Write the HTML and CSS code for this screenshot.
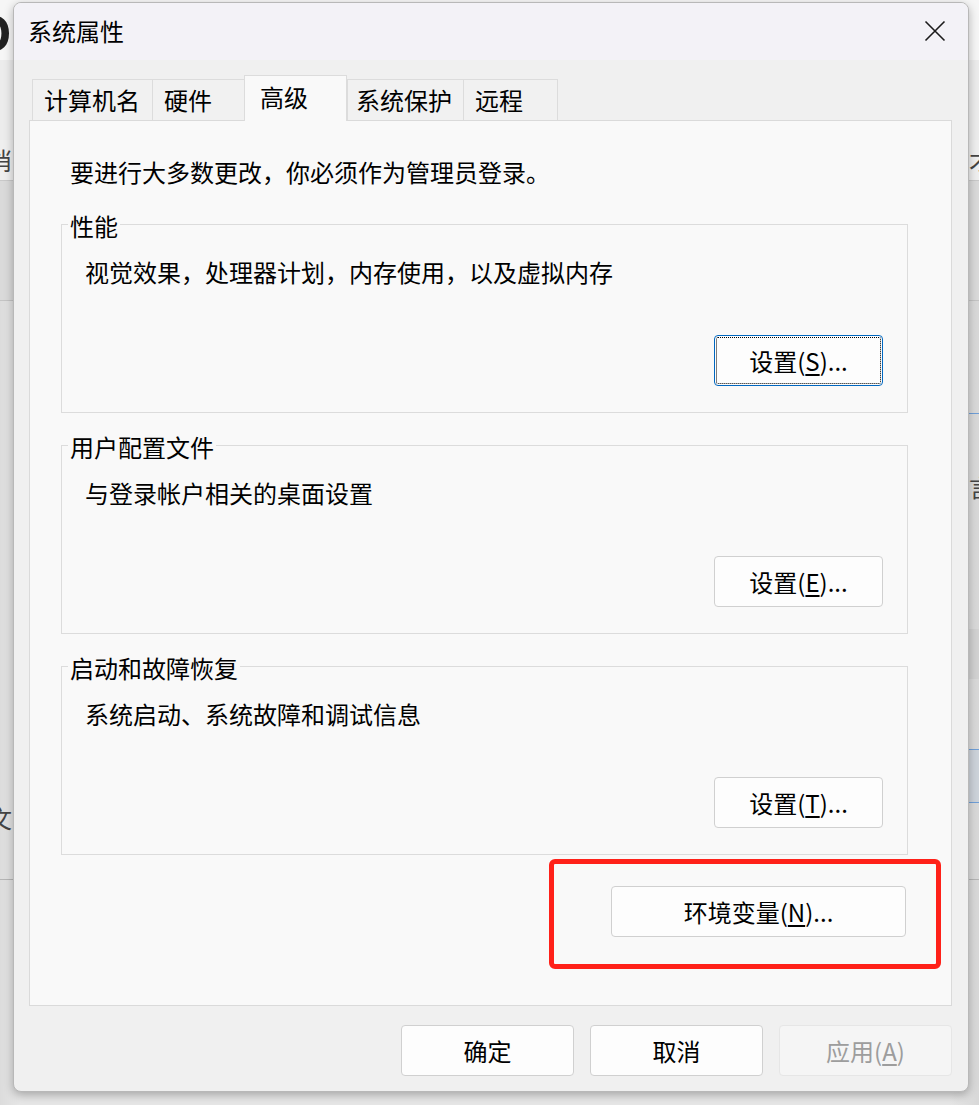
FILE: index.html
```html
<!DOCTYPE html>
<html lang="zh-CN">
<head>
  <meta charset="UTF-8">
  <title>系统属性</title>
  <link rel="stylesheet" href="styles.css">
</head>
<body>
  <!-- app behind the dialog -->
  <div class="backdrop">
    <div class="bd-head"><span class="bd-logo">D</span></div>
    <div class="bd-strip"></div>
    <div class="bd-row"><span class="bd-left">消</span><span class="bd-right">才</span></div>
    <div class="bd-gray"></div>
    <div class="bd-gap" style="height:112px"></div>
    <div class="bd-line blue"></div>
    <div class="bd-gap" style="height:58px"></div>
    <div class="bd-row plain"><span></span><span class="bd-right">言</span></div>
    <div class="bd-gap" style="height:127px"></div>
    <div class="bd-band"></div>
    <div class="bd-gap" style="height:70px"></div>
    <div class="bd-line blue"></div>
    <div class="bd-select"></div>
    <div class="bd-line blue"></div>
    <div class="bd-row plain"><span class="bd-left">文</span><span></span></div>
    <div class="bd-gap" style="height:46px"></div>
    <div class="bd-line gray"></div>
  </div>

  <div class="window">
    <div class="titlebar">
      <span class="title">系统属性</span>
      <svg class="close" width="22" height="22" viewBox="0 0 22 22">
        <path d="M1.5 1.5 L20.5 20.5 M20.5 1.5 L1.5 20.5" stroke="#1b1b1b" stroke-width="1.6" fill="none"/>
      </svg>
    </div>

    <div class="dialog-body">
      <div class="tabs">
        <div class="tab" style="width:120px">计算机名</div>
        <div class="tab" style="width:92px">硬件</div>
        <div class="tab active" style="width:103px">高级</div>
        <div class="tab narrow" style="width:116px">系统保护</div>
        <div class="tab last" style="width:95px">远程</div>
      </div>

      <div class="panel">
        <p class="intro">要进行大多数更改，你必须作为管理员登录。</p>

        <div class="group">
          <span class="group-title">性能</span>
          <p class="group-desc">视觉效果，处理器计划，内存使用，以及虚拟内存</p>
          <button class="btn settings focused">设置(<u>S</u>)...</button>
        </div>

        <div class="group">
          <span class="group-title">用户配置文件</span>
          <p class="group-desc">与登录帐户相关的桌面设置</p>
          <button class="btn settings">设置(<u>E</u>)...</button>
        </div>

        <div class="group">
          <span class="group-title">启动和故障恢复</span>
          <p class="group-desc">系统启动、系统故障和调试信息</p>
          <button class="btn settings">设置(<u>T</u>)...</button>
        </div>

        <div class="highlight">
          <button class="btn env">环境变量(<u>N</u>)...</button>
        </div>
      </div>

      <div class="footer">
        <button class="btn action">确定</button>
        <button class="btn action">取消</button>
        <button class="btn action disabled">应用(<u>A</u>)</button>
      </div>
    </div>
  </div>
</body>
</html>
```

FILE: styles.css
```css
* {
  box-sizing: border-box;
}
body {
  margin: 0;
  width: 979px;
  height: 1105px;
  overflow: hidden;
  position: relative;
  font-family: "Noto Sans CJK SC", "Noto Sans", sans-serif;
  font-size: 24px;
  line-height: 28px;
  color: #000;
  background: linear-gradient(to right, #dcdcdc, #e6e6e6 20px, #e6e6e6 950px, #d8d8d8);
}
p {
  margin: 0;
}

/* backdrop */
.backdrop {
  display: flex;
  flex-direction: column;
}
.bd-head {
  height: 60px;
  background: #f6f6f6;
  overflow: hidden;
}
.bd-logo {
  display: block;
  margin-left: -24px;
  font-size: 50px;
  line-height: 60px;
  font-weight: bold;
  color: #222;
}
.bd-strip {
  height: 80px;
  background: #ececec;
}
.bd-row {
  height: 41px;
  display: flex;
  justify-content: space-between;
  align-items: center;
  background: #efefef;
  border-bottom: 1px solid #c9c9c9;
  color: #444;
  overflow: hidden;
}
.bd-row.plain {
  height: 30px;
  background: transparent;
  border: none;
}
.bd-left {
  margin-left: -12px;
}
.bd-right {
  margin-right: -14px;
}
.bd-gray {
  height: 120px;
  background: #dadada;
  border-bottom: 1px solid #c4c4c4;
}
.bd-band {
  height: 50px;
  background: linear-gradient(to right, transparent 960px, #d2d2d2 960px);
}
.bd-select {
  height: 52px;
  background: linear-gradient(to right, transparent 960px, #cdd3da 960px);
}
.bd-line {
  height: 1px;
}
.bd-line.blue {
  background: linear-gradient(to right, transparent 960px, #6f9fd8 960px);
}
.bd-line.gray {
  background: #b5b5b5;
}

/* dialog window */
.window {
  position: absolute;
  left: 13px;
  top: 2px;
  width: 956px;
  height: 1090px;
  display: flex;
  flex-direction: column;
  background: #f0f0f0;
  border: 1px solid #b8b8b8;
  border-radius: 8px;
  box-shadow: 0 3px 10px rgba(0, 0, 0, 0.28);
  overflow: hidden;
}
.titlebar {
  height: 57px;
  flex: none;
  display: flex;
  align-items: center;
  justify-content: space-between;
  padding: 0 22px 2px 14px;
  background: #f3f2f7;
}
.close {
  margin-top: 1px;
}
.dialog-body {
  flex: 1;
  display: flex;
  flex-direction: column;
  padding: 0 16px 0 15px;
}

/* tabs */
.tabs {
  display: flex;
  align-items: flex-end;
  margin-top: 15px;
  padding-left: 3px;
}
.tab {
  height: 41px;
  padding-left: 11px;
  line-height: 40px;
  background: #f1f1f1;
  border: 1px solid #dcdcdc;
  border-bottom: none;
  border-right: none;
}
.tab.last {
  border-right: 1px solid #dcdcdc;
}
.tab.narrow {
  padding-left: 8px;
}
.tab.active {
  position: relative;
  z-index: 1;
  height: 46px;
  margin-bottom: -1px;
  padding-left: 15px;
  line-height: 42px;
  background: #f9f9f9;
  border-right: 1px solid #dcdcdc;
}

/* tab panel */
.panel {
  height: 886px;
  display: flex;
  flex-direction: column;
  padding: 37px 43px 0 31px;
  background: #f9f9f9;
  border: 1px solid #dadada;
}
.intro {
  margin-left: 9px;
}
.group {
  height: 189px;
  margin-top: 32px;
  display: flex;
  flex-direction: column;
  border: 1px solid #dcdcdc;
}
.intro + .group {
  margin-top: 38px;
}
.group-title {
  align-self: flex-start;
  margin: -13px 0 0 6px;
  padding: 0 2px;
  background: #f9f9f9;
}
.group-desc {
  margin-top: 18px;
  padding-left: 23px;
}

/* buttons */
.btn {
  height: 51px;
  padding: 0;
  font: inherit;
  color: #000;
  background: #fdfdfd;
  border: 1px solid #d0d0d0;
  border-radius: 4px;
}
.btn u {
  text-underline-offset: 3px;
}
.settings {
  width: 169px;
  align-self: flex-end;
  margin: auto 24px 26px 0;
}
.focused {
  border-color: #0067c0;
  outline: 1px dotted #000;
  outline-offset: -3px;
}
.highlight {
  align-self: flex-end;
  width: 392px;
  margin: 4px -33px 0 0;
  padding: 22px 30px 27px 57px;
  border: 5px solid #ff2119;
  border-radius: 6px;
}
.env {
  width: 295px;
  display: block;
}
.footer {
  display: flex;
  justify-content: flex-end;
  gap: 16px;
  margin-top: 19px;
}
.action {
  width: 173px;
}
.disabled {
  color: #9d9d9d;
  background: #f5f5f5;
  border-color: #e6e6e6;
}
```
